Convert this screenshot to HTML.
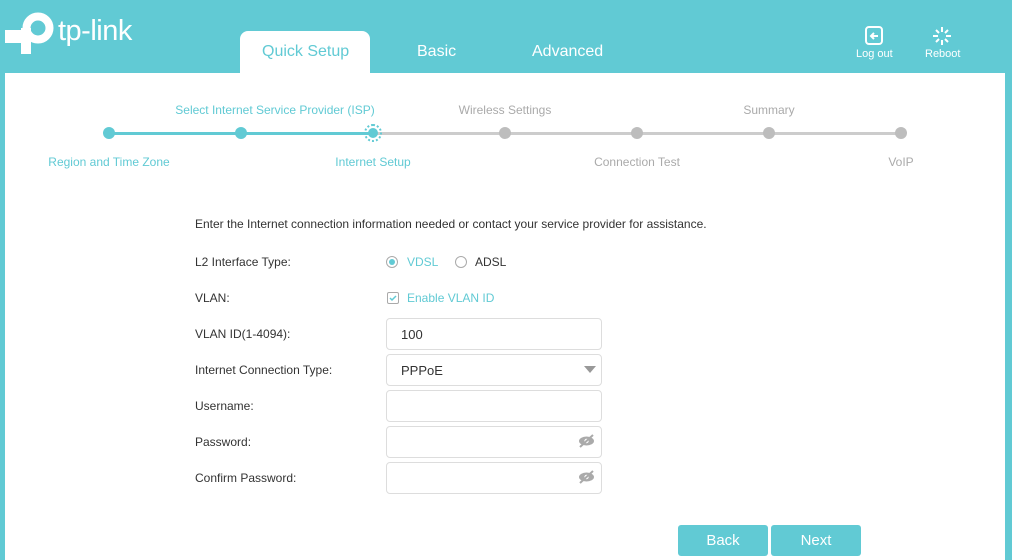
<!DOCTYPE html>
<html><head><meta charset="utf-8"><style>
*{margin:0;padding:0;box-sizing:border-box}
body{width:1012px;height:560px;overflow:hidden;background:#61cad4;font-family:"Liberation Sans",Arial,sans-serif;position:relative}
.a{position:absolute}
.main{left:5px;top:73px;width:1000px;height:487px;background:#fff}
.tab{font-size:16px;color:#fff;top:43px}
.lbl{font-size:12px;white-space:nowrap;transform:translateX(-50%)}
.dot{width:12px;height:12px;border-radius:50%;background:#61cad4;top:127px}
.g{background:#bdbdbd}
.fl{left:195px;font-size:12px;color:#333}
.in{left:386px;width:216px;height:32px;border:1px solid #ddd;border-radius:4px;font-size:13px;color:#333;padding:8px 14px}
.btn{top:525px;width:90px;height:31px;background:#61cad4;color:#fff;font-size:15px;text-align:center;line-height:31px;border-radius:3px}
</style></head><body>
<svg class="a" style="left:0;top:0" width="60" height="60" viewBox="0 0 60 60"><circle cx="38" cy="28" r="11.5" fill="none" stroke="#fff" stroke-width="8"/><rect x="21" y="28" width="10" height="26" fill="#fff"/><rect x="5" y="30" width="26" height="13" fill="#fff"/></svg>
<div class="a" style="left:58px;top:15px;font-size:29px;color:#fff;letter-spacing:-0.5px">tp-link</div>
<div class="a" style="left:240px;top:31px;width:130px;height:43px;background:#fff;border-radius:8px 8px 0 0"></div>
<div class="a tab" style="left:262px;color:#61cad4">Quick Setup</div>
<div class="a tab" style="left:417px">Basic</div>
<div class="a tab" style="left:532px">Advanced</div>
<svg class="a" style="left:864px;top:26px" width="20" height="20" viewBox="0 0 20 20"><rect x="2" y="1" width="16" height="17" rx="3" fill="none" stroke="#fff" stroke-width="2"/><path d="M8 10h6M10 7l-3 3 3 3" stroke="#fff" stroke-width="2" fill="none"/></svg>
<div class="a" style="left:856px;top:48px;font-size:11px;color:#fff">Log out</div>
<svg class="a" style="left:932px;top:26px" width="20" height="20" viewBox="0 0 20 20" stroke="#fff" stroke-width="2"><path d="M10 1v5M10 14v5M1 10h5M14 10h5M4 4l3 3M13 13l3 3M4 16l3-3M16 4l-3 3"/></svg>
<div class="a" style="left:925px;top:48px;font-size:11px;color:#fff">Reboot</div>
<div class="a main"></div>
<div class="a" style="left:109px;top:132px;width:264px;height:3px;background:#61cad4"></div>
<div class="a" style="left:373px;top:132px;width:528px;height:3px;background:#ccc"></div>
<div class="a dot" style="left:103px"></div><div class="a dot" style="left:235px"></div>
<div class="a" style="left:364px;top:124px;width:18px;height:18px;border-radius:50%;border:2px dotted #61cad4"></div>
<div class="a dot" style="left:368px;top:128px;width:10px;height:10px"></div>
<div class="a dot g" style="left:499px"></div><div class="a dot g" style="left:631px"></div><div class="a dot g" style="left:763px"></div><div class="a dot g" style="left:895px"></div>
<div class="a lbl" style="left:275px;top:103px;color:#61cad4">Select Internet Service Provider (ISP)</div>
<div class="a lbl" style="left:505px;top:103px;color:#aaa">Wireless Settings</div>
<div class="a lbl" style="left:769px;top:103px;color:#aaa">Summary</div>
<div class="a lbl" style="left:109px;top:155px;color:#61cad4">Region and Time Zone</div>
<div class="a lbl" style="left:373px;top:155px;color:#61cad4">Internet Setup</div>
<div class="a lbl" style="left:637px;top:155px;color:#aaa">Connection Test</div>
<div class="a lbl" style="left:901px;top:155px;color:#aaa">VoIP</div>
<div class="a fl" style="top:217px">Enter the Internet connection information needed or contact your service provider for assistance.</div>
<div class="a fl" style="top:255px">L2 Interface Type:</div>
<div class="a" style="left:386px;top:256px;width:12px;height:12px;border-radius:50%;border:1px solid #aaa"></div>
<div class="a" style="left:389px;top:259px;width:6px;height:6px;border-radius:50%;background:#61cad4"></div>
<div class="a" style="left:407px;top:255px;font-size:12px;color:#61cad4">VDSL</div>
<div class="a" style="left:455px;top:256px;width:12px;height:12px;border-radius:50%;border:1px solid #aaa"></div>
<div class="a" style="left:475px;top:255px;font-size:12px;color:#333">ADSL</div>
<div class="a fl" style="top:291px">VLAN:</div>
<div class="a" style="left:387px;top:292px;width:12px;height:12px;border:1px solid #aaa;border-radius:2px"></div>
<svg class="a" style="left:387px;top:292px" width="12" height="12"><path d="M3 6l2 2 4-4" stroke="#61cad4" stroke-width="1.5" fill="none"/></svg>
<div class="a" style="left:407px;top:291px;font-size:12px;color:#61cad4">Enable VLAN ID</div>
<div class="a fl" style="top:327px">VLAN ID(1-4094):</div>
<div class="a in" style="top:318px">100</div>
<div class="a fl" style="top:363px">Internet Connection Type:</div>
<div class="a in" style="top:354px">PPPoE</div>
<svg class="a" style="left:584px;top:366px" width="12" height="8"><path d="M0 0h12L6 7z" fill="#999"/></svg>
<div class="a fl" style="top:399px">Username:</div>
<div class="a in" style="top:390px"></div>
<div class="a fl" style="top:435px">Password:</div>
<div class="a in" style="top:426px"></div>
<div class="a fl" style="top:471px">Confirm Password:</div>
<div class="a in" style="top:462px"></div>
<svg class="a" style="left:578px;top:434px" width="17" height="14" viewBox="0 0 17 14"><ellipse cx="8.5" cy="7" rx="7.5" ry="4.5" fill="#aaa"/><circle cx="8.5" cy="7" r="2.2" fill="#fff"/><path d="M2 13L15 1" stroke="#aaa" stroke-width="2"/></svg>
<svg class="a" style="left:578px;top:470px" width="17" height="14" viewBox="0 0 17 14"><ellipse cx="8.5" cy="7" rx="7.5" ry="4.5" fill="#aaa"/><circle cx="8.5" cy="7" r="2.2" fill="#fff"/><path d="M2 13L15 1" stroke="#aaa" stroke-width="2"/></svg>
<div class="a btn" style="left:678px">Back</div>
<div class="a btn" style="left:771px">Next</div>
</body></html>
